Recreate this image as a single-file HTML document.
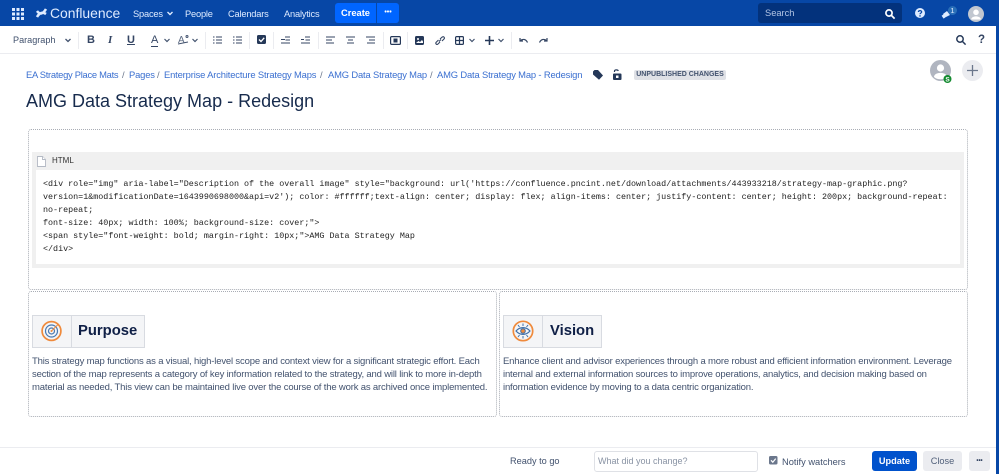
<!DOCTYPE html>
<html><head><meta charset="utf-8"><style>
html,body{margin:0;padding:0;width:999px;height:474px;overflow:hidden;background:#fff;font-family:"Liberation Sans",sans-serif;color:#172b4d}
.a{position:absolute;white-space:nowrap}
svg{position:absolute;overflow:visible}
.nav{color:#deebff;font-size:9.3px;letter-spacing:-.2px;top:7px;line-height:14px}
.bc{color:#3a6fd0;font-size:9.4px;letter-spacing:-.15px;top:69px;line-height:12px}
.sep{color:#6b778c}
.dash{position:absolute;border:1px dotted #a9adb5;border-radius:3px;box-sizing:border-box}
.code{font-family:"Liberation Mono",monospace;font-size:8.4px;color:#222;line-height:13px;left:43px}
.p{font-size:9.5px;letter-spacing:-.17px;color:#42526e;line-height:13px}
.cell{position:absolute;background:#f4f5f7;border:1px solid #d8dbe1;box-sizing:border-box}
</style></head><body>
<div class="a" style="left:0;top:0;width:999px;height:26px;background:#0747a6"></div>
<div class="a" style="left:996px;top:0;width:3px;height:474px;background:#0747a6"></div>
<div class="a" style="left:0;top:26px;width:996px;height:27px;background:#fff;border-bottom:1px solid #ebecf0"></div>

<!-- app switcher -->
<svg style="left:12px;top:8px" width="12" height="12" fill="#deebff"><rect x="0" y="0" width="3" height="3"/><rect x="4.5" y="0" width="3" height="3"/><rect x="9" y="0" width="3" height="3"/><rect x="0" y="4.5" width="3" height="3"/><rect x="4.5" y="4.5" width="3" height="3"/><rect x="9" y="4.5" width="3" height="3"/><rect x="0" y="9" width="3" height="3"/><rect x="4.5" y="9" width="3" height="3"/><rect x="9" y="9" width="3" height="3"/></svg>
<!-- logo -->
<svg style="left:36px;top:8px" width="11" height="10" fill="none" stroke="#deebff" stroke-width="2.6"><path d="M1 9C4 4 7 4 10 6M1 3C4 7 7 6 10 1"/></svg>
<div class="a" style="left:50px;top:4px;font-size:13.9px;line-height:18px;color:#deebff">Confluence</div>
<div class="a nav" style="left:133px">Spaces</div>
<svg style="left:167px;top:11px" width="6" height="5" fill="none" stroke="#deebff" stroke-width="1.4"><path d="M0.5 1L3 3.5L5.5 1"/></svg>
<div class="a nav" style="left:185px">People</div>
<div class="a nav" style="left:228px">Calendars</div>
<div class="a nav" style="left:284px">Analytics</div>
<div class="a" style="left:335px;top:3px;width:41px;height:20px;background:#0065ff;border-radius:3px 0 0 3px;color:#fff;font-size:9.3px;font-weight:bold;line-height:20px;text-align:center">Create</div>
<div class="a" style="left:376px;top:3px;width:23px;height:20px;background:#0065ff;border-left:1px solid #0747a6;box-sizing:border-box;border-radius:0 3px 3px 0;color:#fff;font-size:7px;font-weight:bold;line-height:19px;text-align:center">•••</div>

<div class="a" style="left:758px;top:3px;width:144px;height:20px;background:#03327c;border-radius:3px"></div>
<div class="a" style="left:765px;top:7px;font-size:9.3px;line-height:13px;color:#b3c5e4">Search</div>
<svg style="left:885px;top:9px" width="10" height="10" fill="none" stroke="#fff" stroke-width="1.7"><circle cx="4" cy="4" r="3.1"/><path d="M6.4 6.4L9.6 9.6"/></svg>
<svg style="left:915px;top:8px" width="10" height="10"><circle cx="5" cy="5" r="5" fill="#deebff"/><path d="M3.4 4C3.4 2.2 6.7 2.2 6.7 4C6.7 5 5 5 5 6.2" fill="none" stroke="#0747a6" stroke-width="1.2"/><circle cx="5" cy="7.9" r=".8" fill="#0747a6"/></svg>
<svg style="left:942px;top:9px" width="10" height="10" fill="#deebff"><path d="M1 5L5 2L8 6L4 8Z"/><rect x="0" y="6" width="3" height="3.5" transform="rotate(-35 1 7)"/></svg>
<div class="a" style="left:948px;top:6px;width:9px;height:9px;border-radius:50%;background:#2a6fb8;color:#deebff;font-size:7.5px;line-height:9px;text-align:center">1</div>
<svg style="left:968px;top:6px" width="16" height="16"><circle cx="8" cy="8" r="8" fill="#c1c7d0"/><circle cx="8" cy="6.3" r="2.8" fill="#fff"/><path d="M3.2 13.5C3.2 9.3 12.8 9.3 12.8 13.5Z" fill="#fff"/></svg>

<!-- toolbar -->
<div class="a" style="left:13px;top:34px;font-size:9.1px;line-height:13px;color:#42526e">Paragraph</div>
<svg style="left:65px;top:38px" width="6" height="5" fill="none" stroke="#42526e" stroke-width="1.3"><path d="M0.5 1L3 3.5L5.5 1"/></svg>
<div class="a" style="left:78px;top:32px;width:1px;height:17px;background:#ebecf0"></div>
<div class="a" style="left:87px;top:34px;font-size:11px;font-weight:bold;line-height:13px;color:#344563">B</div>
<div class="a" style="left:108px;top:34px;font-size:11px;font-weight:bold;font-style:italic;font-family:'Liberation Serif',serif;line-height:13px;color:#344563">I</div>
<div class="a" style="left:127px;top:34px;font-size:11px;font-weight:bold;line-height:12px;color:#344563;text-decoration:underline">U</div>
<div class="a" style="left:151px;top:34px;font-size:11px;line-height:12px;color:#344563;border-bottom:1.5px solid #344563">A</div>
<svg style="left:164px;top:38px" width="6" height="5" fill="none" stroke="#42526e" stroke-width="1.2"><path d="M0.5 1L3 3.5L5.5 1"/></svg>
<div class="a" style="left:178px;top:35px;font-size:10px;line-height:12px;color:#5e6c84">A</div>
<svg style="left:178px;top:35px" width="12" height="11" fill="none" stroke="#42526e"><path d="M0 9L10 7"/><circle cx="9" cy="1.5" r="1"/></svg>
<svg style="left:192px;top:38px" width="6" height="5" fill="none" stroke="#42526e" stroke-width="1.2"><path d="M0.5 1L3 3.5L5.5 1"/></svg>
<div class="a" style="left:205px;top:32px;width:1px;height:17px;background:#ebecf0"></div>
<svg style="left:213px;top:36px" width="9" height="8" stroke="#344563" stroke-width="1"><path d="M0 1H1.5M3 1H9M0 4H1.5M3 4H9M0 7H1.5M3 7H9"/></svg>
<svg style="left:233px;top:36px" width="9" height="8" stroke="#344563" stroke-width="1"><path d="M0 1H1.5M3 1H9M0 4H1.5M3 4H9M0 7H1.5M3 7H9"/></svg>
<div class="a" style="left:249px;top:32px;width:1px;height:17px;background:#ebecf0"></div>
<svg style="left:257px;top:35px" width="10" height="10"><rect width="9" height="9" rx="1.5" fill="#253858"/><path d="M2 4.5L4 6.5L7.2 2.8" fill="none" stroke="#fff" stroke-width="1.3"/></svg>
<div class="a" style="left:273px;top:32px;width:1px;height:17px;background:#ebecf0"></div>
<svg style="left:281px;top:36px" width="9" height="8" stroke="#344563" stroke-width="1"><path d="M0 3.5H4M4 1H9M4.5 4H9M0 7H9"/></svg>
<svg style="left:301px;top:36px" width="9" height="8" stroke="#344563" stroke-width="1"><path d="M0 3.5H3M4 1H9M4.5 4H9M0 7H9"/></svg>
<div class="a" style="left:318px;top:32px;width:1px;height:17px;background:#ebecf0"></div>
<svg style="left:326px;top:36px" width="9" height="8" stroke="#344563" stroke-width="1"><path d="M0 1H9M0 4H6M0 7H8"/></svg>
<svg style="left:346px;top:36px" width="9" height="8" stroke="#344563" stroke-width="1"><path d="M0 1H9M2 4H7M1 7H8"/></svg>
<svg style="left:366px;top:36px" width="9" height="8" stroke="#344563" stroke-width="1"><path d="M0 1H9M3 4H9M1 7H9"/></svg>
<div class="a" style="left:383px;top:32px;width:1px;height:17px;background:#ebecf0"></div>
<svg style="left:390px;top:36px" width="11" height="9"><rect x=".6" y=".6" width="9.8" height="7.8" rx="1" fill="none" stroke="#253858" stroke-width="1.2"/><rect x="3.5" y="2.5" width="4" height="4" fill="#253858"/></svg>
<div class="a" style="left:407px;top:32px;width:1px;height:17px;background:#ebecf0"></div>
<svg style="left:415px;top:36px" width="9" height="9"><rect width="9" height="9" rx="1.5" fill="#253858"/><circle cx="3" cy="3" r="1" fill="#fff"/><path d="M1 7L3.5 5L5 6L7 4L8 5.5V7Z" fill="#fff"/></svg>
<svg style="left:435px;top:36px" width="10" height="9" fill="none" stroke="#344563" stroke-width="1.1"><path d="M4 5.5L6 3.5M3.5 4L1.2 6.2C0 8 2 9 3 8L5 6M5 3L7.3 1C9 0 10 2 9 3L7 5"/></svg>
<svg style="left:455px;top:36px" width="9" height="9" fill="none" stroke="#253858" stroke-width="1.2"><rect x=".6" y=".6" width="7.8" height="7.8" rx="1"/><path d="M0 4.5H9M4.5 0V9"/></svg>
<svg style="left:469px;top:38px" width="6" height="5" fill="none" stroke="#42526e" stroke-width="1.2"><path d="M0.5 1L3 3.5L5.5 1"/></svg>
<svg style="left:485px;top:36px" width="9" height="9" stroke="#253858" stroke-width="1.6"><path d="M0 4.5H9M4.5 0V9"/></svg>
<svg style="left:498px;top:38px" width="6" height="5" fill="none" stroke="#42526e" stroke-width="1.2"><path d="M0.5 1L3 3.5L5.5 1"/></svg>
<div class="a" style="left:511px;top:32px;width:1px;height:17px;background:#ebecf0"></div>
<svg style="left:519px;top:37px" width="9" height="7" fill="none" stroke="#344563" stroke-width="1.2"><path d="M1 1V4H4M1 4C3.5 1.5 7 2 8.5 5.5"/></svg>
<svg style="left:539px;top:37px" width="9" height="7" fill="none" stroke="#344563" stroke-width="1.2"><path d="M8 1V4H5M8 4C5.5 1.5 2 2 .5 5.5"/></svg>
<svg style="left:956px;top:35px" width="10" height="10" fill="none" stroke="#253858" stroke-width="1.5"><circle cx="4" cy="4" r="3.2"/><path d="M6.4 6.4L9.6 9.6"/></svg>
<div class="a" style="left:978px;top:34px;font-size:11.5px;font-weight:bold;line-height:13px;color:#344563">?</div>

<!-- breadcrumbs -->
<div class="a bc" style="left:26px;letter-spacing:-.28px">EA Strategy Place Mats</div>
<div class="a bc sep" style="left:122px">/</div>
<div class="a bc" style="left:129px">Pages</div>
<div class="a bc sep" style="left:157px">/</div>
<div class="a bc" style="left:164px">Enterprise Architecture Strategy Maps</div>
<div class="a bc sep" style="left:320px">/</div>
<div class="a bc" style="left:328px">AMG Data Strategy Map</div>
<div class="a bc sep" style="left:430px">/</div>
<div class="a bc" style="left:437px">AMG Data Strategy Map - Redesign</div>
<svg style="left:593px;top:70px" width="10" height="10" fill="#253858"><path d="M0 1.5L1.5 0H5L10 5.5L6 9.8L0 4.5Z"/></svg>
<svg style="left:613px;top:69px" width="9" height="11"><rect x="0" y="4.5" width="8.5" height="6.5" rx="1" fill="#253858"/><rect x="3" y="6.5" width="2.5" height="2.5" fill="#fff"/><path d="M1.5 3V2C1.5 .5 5 .5 5.2 2" fill="none" stroke="#253858" stroke-width="1.2"/></svg>
<div class="a" style="left:634px;top:70px;height:10px;width:92px;background:#dfe1e6;border-radius:2px;color:#42526e;font-size:7px;font-weight:bold;line-height:10px;text-align:center">UNPUBLISHED CHANGES</div>

<svg style="left:930px;top:60px" width="24" height="24"><circle cx="10.5" cy="10.5" r="10.5" fill="#b0b5c0"/><circle cx="10.5" cy="8" r="3.6" fill="#fff"/><path d="M4 17C4 11.5 17 11.5 17 17C14 20 7 20 4 17Z" fill="#fff"/><circle cx="17.5" cy="19" r="4" fill="#138a2f"/><text x="17.5" y="21.5" font-size="6.5" font-weight="bold" text-anchor="middle" fill="#fff" font-family="Liberation Sans">S</text></svg>
<svg style="left:962px;top:60px" width="21" height="21"><circle cx="10.5" cy="10.5" r="10.5" fill="#ebecf0"/><path d="M10.5 5V16M5 10.5H16" stroke="#6b778c" stroke-width="1.3"/></svg>

<div class="a" style="left:26px;top:90px;font-size:18px;line-height:22px;color:#172b4d">AMG Data Strategy Map - Redesign</div>

<!-- layout boxes -->
<div class="dash" style="left:28px;top:129px;width:940px;height:161px"></div>
<div class="a" style="left:32px;top:152px;width:932px;height:116px;background:#f0f0f0"></div>
<div class="a" style="left:36px;top:170px;width:924px;height:94px;background:#fff"></div>
<svg style="left:37px;top:156px" width="9" height="11" fill="#fff" stroke="#b3b9c4" stroke-width=".9"><path d="M.5.5H5.5L8.5 3.5V10.5H.5Z"/><path d="M5.5.5V3.5H8.5"/></svg>
<div class="a" style="left:52px;top:155px;font-size:8px;line-height:12px;color:#333">HTML</div>
<div class="a code" style="top:178px">&lt;div role="img" aria-label="Description of the overall image" style="background: url('https://confluence.pncint.net/download/attachments/443933218/strategy-map-graphic.png?</div>
<div class="a code" style="top:191px">version=1&amp;modificationDate=1643990698000&amp;api=v2'); color: #ffffff;text-align: center; display: flex; align-items: center; justify-content: center; height: 200px; background-repeat:</div>
<div class="a code" style="top:204px">no-repeat;</div>
<div class="a code" style="top:217px">font-size: 40px; width: 100%; background-size: cover;"&gt;</div>
<div class="a code" style="top:230px">&lt;span style="font-weight: bold; margin-right: 10px;"&gt;AMG Data Strategy Map</div>
<div class="a code" style="top:243px">&lt;/div&gt;</div>

<div class="dash" style="left:28px;top:291px;width:469px;height:126px"></div>
<div class="dash" style="left:499px;top:291px;width:469px;height:126px"></div>

<div class="cell" style="left:32px;top:315px;width:40px;height:33px"></div>
<div class="cell" style="left:71px;top:315px;width:74px;height:33px"></div>
<svg style="left:41px;top:320px" width="22" height="22" fill="none"><circle cx="10.5" cy="11" r="9.4" stroke="#ef8a3c" stroke-width="1.7"/><circle cx="10.5" cy="11" r="6" stroke="#4a78b0" stroke-width="1.2"/><circle cx="10.5" cy="11" r="3" stroke="#4a78b0" stroke-width="1.2"/><circle cx="10.5" cy="11" r="1" fill="#ef8a3c"/><path d="M11 10.5L17 4.5" stroke="#ef8a3c"/></svg>
<div class="a" style="left:78px;top:322px;font-size:14.8px;font-weight:bold;line-height:18px;color:#0f1f46">Purpose</div>
<div class="a p" style="left:32px;top:355px">This strategy map functions as a visual, high-level scope and context view for a significant strategic effort. Each</div>
<div class="a p" style="left:32px;top:368px">section of the map represents a category of key information related to the strategy, and will link to more in-depth</div>
<div class="a p" style="left:32px;top:381px">material as needed, This view can be maintained live over the course of the work as archived once implemented.</div>

<div class="cell" style="left:503px;top:315px;width:40px;height:33px"></div>
<div class="cell" style="left:542px;top:315px;width:60px;height:33px"></div>
<svg style="left:512px;top:320px" width="22" height="22" fill="none"><circle cx="11" cy="11" r="9.7" stroke="#ef8a3c" stroke-width="1.7"/><path d="M4 11C8 6.5 14 6.5 18 11C14 15.5 8 15.5 4 11Z" stroke="#3f6fa8" stroke-width="1.2"/><circle cx="11" cy="11" r="2.3" fill="#ef8a3c" stroke="#3f6fa8"/><path d="M11 3.5V6M6 5L7.5 7M16 5L14.500 7M11 16V18.500M6 17L7.500 15M16 17L14.500 15" stroke="#3f6fa8"/></svg>
<div class="a" style="left:550px;top:322px;font-size:14.8px;font-weight:bold;line-height:18px;color:#0f1f46">Vision</div>
<div class="a p" style="left:503px;top:355px">Enhance client and advisor experiences through a more robust and efficient information environment. Leverage</div>
<div class="a p" style="left:503px;top:368px">internal and external information sources to improve operations, analytics, and decision making based on</div>
<div class="a p" style="left:503px;top:381px">information evidence by moving to a data centric organization.</div>

<!-- footer -->
<div class="a" style="left:0;top:447px;width:996px;height:1px;background:#ebecf0"></div>
<div class="a" style="left:510px;top:455px;font-size:9.2px;line-height:13px;color:#42526e">Ready to go</div>
<div class="a" style="left:594px;top:451px;width:164px;height:21px;border:1px solid #dfe1e6;border-radius:3px;box-sizing:border-box"></div>
<div class="a" style="left:598px;top:455px;font-size:9px;line-height:13px;color:#8993a4">What did you change?</div>
<svg style="left:769px;top:456px" width="9" height="9"><rect width="8.500" height="8.500" rx="1.500" fill="#6b778c"/><path d="M2 4.300L3.800 6.200L6.700 2.600" fill="none" stroke="#fff" stroke-width="1.200"/></svg>
<div class="a" style="left:782px;top:456px;font-size:9.3px;line-height:13px;color:#42526e">Notify watchers</div>
<div class="a" style="left:872px;top:451px;width:45px;height:20px;background:#0052cc;border-radius:3px;color:#fff;font-size:9.2px;font-weight:bold;line-height:21px;text-align:center">Update</div>
<div class="a" style="left:923px;top:451px;width:39px;height:20px;background:#ebecf0;border-radius:3px;color:#505f79;font-size:9.2px;line-height:21px;text-align:center">Close</div>
<div class="a" style="left:969px;top:451px;width:21px;height:20px;background:#ebecf0;border-radius:3px;color:#344563;font-size:6px;font-weight:bold;line-height:20px;text-align:center">•••</div>
</body></html>
